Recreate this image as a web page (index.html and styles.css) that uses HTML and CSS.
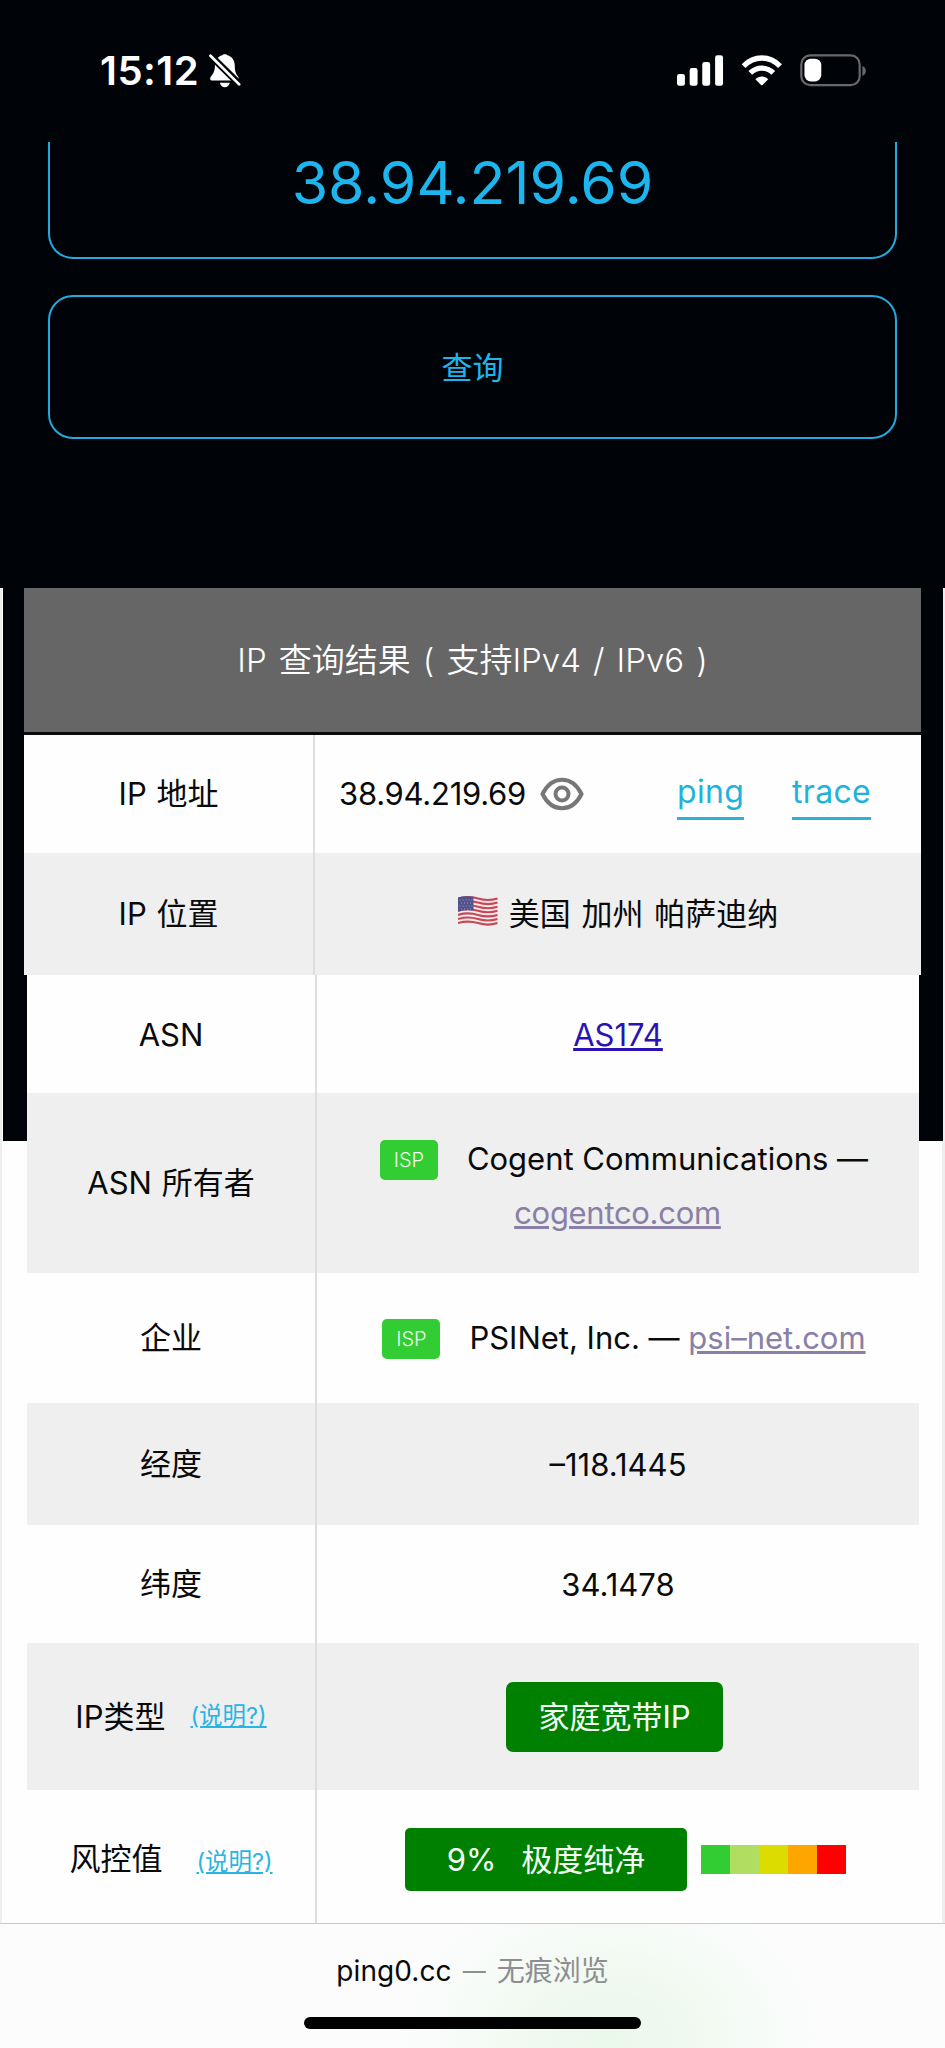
FILE: index.html
```html
<!DOCTYPE html>
<html lang="zh-CN">
<head>
<meta charset="utf-8">
<title>ping0.cc</title>
<link rel="stylesheet" href="styles.css">
</head>
<body>
<div class="phone">
  <header class="status">
    <span class="clock">15:12</span>
    <svg class="bell" width="32" height="36" viewBox="0 0 32 36">
      <path fill="#fff" d="M13.5 2.2C13.5.6 18.500.6 18.500 2.200C23.500 3.500 26 7.500 26 12.500C26 19 27.500 21.500 29.300 23.500C30.800 25.500 30 27.600 27.500 27.600H3.500C1 27.600.5 25.300 2 23.500C4 21 6 18.500 6 12.500C6 7.500 8.500 3.500 13.500 2.200ZM11 29.800H21C20.300 32.700 18.500 34.300 16 34.300S11.700 32.700 11 29.800Z"/>
      <path stroke="#000408" stroke-width="7" d="M0 1L32 32.500"/>
      <path stroke="#fff" stroke-width="2.800" stroke-linecap="round" d="M1.500 2.500L30.500 31.500"/>
    </svg>
    <svg class="signal" width="48" height="32" viewBox="0 0 48 32">
      <g fill="#fff"><rect x="0" y="19" width="8" height="12" rx="2.400"/><rect x="12.800" y="13" width="8" height="18" rx="2.400"/><rect x="25.500" y="7" width="8" height="24" rx="2.400"/><rect x="38.500" y="0" width="8" height="31" rx="2.400"/></g>
    </svg>
    <svg class="wifi" width="42" height="32" viewBox="0 0 42 32">
      <g fill="none" stroke="#fff" stroke-width="5.400"><path d="M2.600 11C13.200.2 28.800.2 39.400 11"/><path d="M9.400 18C16 11.400 26 11.400 32.600 18"/></g>
      <path fill="#fff" d="M14.500 24.300C18.200 20.800 23.800 20.800 27.500 24.300L21.700 30.200Q21 30.800 20.300 30.200Z"/>
    </svg>
    <svg class="battery" width="68" height="34" viewBox="0 0 68 34">
      <rect x="1.300" y="1.300" width="59" height="30" rx="9" fill="none" stroke="#69696b" stroke-width="2.200"/>
      <rect x="4.500" y="4.500" width="17" height="23" rx="6.500" fill="#fff"/>
      <path d="M63 12Q66.500 13.500 66.500 17T63 22Z" fill="#69696b"/>
    </svg>
  </header>

  <main>
    <div class="field">38.94.219.69</div>
    <div class="query">查询</div>

    <section class="result">
      <div class="caption"><span>IP 查询结果 ( 支持IPv4 / IPv6 )</span></div>
      <div class="wide">
        <div class="row r-ip">
          <div class="key han">IP 地址</div>
          <div class="val address">
            <span class="ip">38.94.219.69</span>
            <svg class="eye" width="44" height="34" viewBox="0 0 44 34"><g fill="none" stroke="#777" stroke-width="4"><path d="M2.500 17C12-2 32-2 41.500 17C32 36 12 36 2.500 17Z"/><circle cx="22" cy="17" r="6.500"/></g></svg>
            <a class="tool ping">ping</a><a class="tool trace">trace</a>
          </div>
        </div>
        <div class="row alt r-loc">
          <div class="key han">IP 位置</div>
          <div class="val place">
            <svg class="flag" width="40" height="30" viewBox="0 0 40 30">
              <path fill="#f6e9ea" d="M0 2Q10-1 20 2T39.500 2V27Q30 30 20 27T0 28Z"/>
              <g fill="none" stroke="#c44a58" stroke-width="2.100"><path d="M0 2.500Q10-.5 20 2.500T39.500 2.500"/><path d="M0 6.600Q10 3.600 20 6.600T39.500 6.600"/><path d="M0 10.700Q10 7.700 20 10.700T39.500 10.700"/><path d="M0 14.800Q10 11.800 20 14.800T39.500 14.800"/><path d="M0 18.900Q10 15.900 20 18.900T39.500 18.900"/><path d="M0 23Q10 20 20 23T39.500 23"/><path d="M0 27.100Q10 24.100 20 27.100T39.500 27.100"/></g>
              <path fill="#51528c" d="M0 1.500Q8-.8 15.500.8V14.800Q8 13.500 0 15.800Z"/>
              <g stroke="#9a9bc0" stroke-width="1" stroke-dasharray="1 2"><path d="M1.500 4H15M3 7H15M1.500 10H15M3 13H15"/></g>
            </svg>
            <span class="city">美国 加州 帕萨迪纳</span>
          </div>
        </div>
      </div>
      <div class="narrow">
        <div class="row r-asn"><div class="key">ASN</div><div class="val"><a class="asn">AS174</a></div></div>
        <div class="row alt r-owner"><div class="key han">ASN 所有者</div><div class="val"><p class="org two"><span class="isp">ISP</span><span class="orgname">Cogent Communications —</span><br><a class="site cogent">cogentco.com</a></p></div></div>
        <div class="row r-company"><div class="key han">企业</div><div class="val"><p class="org"><span class="isp">ISP</span><span class="orgname inc">PSINet, Inc. — </span><a class="site psi">psi–net.com</a></p></div></div>
        <div class="row alt r-lon"><div class="key han">经度</div><div class="val num">–118.1445</div></div>
        <div class="row r-lat"><div class="key han">纬度</div><div class="val num">34.1478</div></div>
        <div class="row alt r-type"><div class="key han">IP类型<a class="help">(说明?)</a></div><div class="val"><span class="tag type">家庭宽带IP</span></div></div>
        <div class="row r-risk"><div class="key">风控值<a class="help far">(说明?)</a></div><div class="val"><span class="tag risk"><span class="score">9%</span><span>极度纯净</span></span><span class="scale"><i class="s1"></i><i class="s2"></i><i class="s3"></i><i class="s4"></i><i class="s5"></i></span></div></div>
      </div>
    </section>
  </main>

  <footer class="bar">
    <div class="url"><span class="domain">ping0.cc</span><span class="dash">—</span><span>无痕浏览</span></div>
    <div class="home"></div>
  </footer>
</div>
</body>
</html>
```

FILE: styles.css
```css
* { box-sizing: border-box; }
body { margin: 0; background: #fefefe; font-family: Inter, "Noto Sans CJK SC", sans-serif; color: #0a0a0a; }
p { margin: 0; }
.phone { width: 945px; height: 2048px; overflow: hidden; display: flex; flex-direction: column;
  background: linear-gradient(#000408, #000408) 0 0 / 945px 588px no-repeat,
    linear-gradient(#000408, #000408) 2.5px 588px / 940px 553px no-repeat,
    linear-gradient(90deg, #eee 2.5px, #fefefe 2.5px, #fefefe 942.5px, #eee 942.5px); }

.status { height: 142px; display: flex; align-items: flex-start; padding: 54px 78px 0 100px; color: #fff; }
.clock { font-size: 40px; line-height: 34px; font-weight: 600; letter-spacing: 0.5px; width: 110px; white-space: nowrap; }
.bell { margin-top: -1px; }
.signal { margin-left: 436px; margin-top: 1px; }
.wifi { margin-left: 17px; margin-top: 1px; }
.battery { margin-left: 17px; }

.field { margin: 0 48px; height: 117px; border: 2px solid #24a9de; border-top: 0; border-radius: 0 0 25px 25px; text-align: center; font-size: 59px; line-height: 82px; color: #1cb5ee; }
.query { margin: 36px 48px 0; height: 144px; padding-bottom: 3px; border: 2px solid #24a9de; border-radius: 25px; font-size: 31px; color: #1cb5ee; display: flex; align-items: center; justify-content: center; }

.result { margin-top: 149px; font-size: 31px; }
.caption { margin: 0 24px; height: 147px; padding-bottom: 4px; background: #666; border-bottom: 3px solid #0b0b0d; color: #fff; font-size: 33px; font-weight: 350; word-spacing: 2.8px; display: flex; align-items: center; justify-content: center; white-space: nowrap; }
.wide { margin: 0 24px; }
.narrow { margin: 0 26px 0 27px; }
.row { display: flex; background: #fefefe; }
.alt { background: #efefef; }
.key { width: 290px; border-right: 2px solid #dedede; flex: none; display: flex; align-items: center; justify-content: center; white-space: nowrap; }
.wide .key { width: 291px; }
.key.han { padding-bottom: 5px; word-spacing: 1px; }
.val { flex: 1; display: flex; align-items: center; justify-content: center; white-space: nowrap; }
.r-ip { height: 118px; }
.r-loc { height: 122px; }
.r-asn { height: 118px; }
.r-owner { height: 180px; }
.r-company { height: 130px; }
.r-lon { height: 122px; }
.r-lat { height: 118px; }
.r-type { height: 147px; }
.r-risk { height: 133px; }

.address { justify-content: flex-start; padding-left: 24px; }
.ip { width: 201px; letter-spacing: -0.25px; margin-top: -2px; }
.tool { color: #1fb3dc; border-bottom: 3px solid #2cb2d6; line-height: 42px; padding-bottom: 4px; margin-top: 3px; letter-spacing: 0.3px; font-size: 32px; }
.ping { margin-left: 93px; }
.trace { margin-left: 48px; }
.place { gap: 11px; }
.city { word-spacing: 2px; margin-top: -5px; }
.flag { margin-top: -6px; }
.asn { color: #2b12b5; text-decoration: underline; }
.org { text-align: center; line-height: 54px; padding-right: 4px; }
.org.two { padding-top: 5px; }
.isp { display: inline-block; margin-left: 16px; margin-right: 29px; width: 58px; height: 40px; border-radius: 5px; background: #32cd32; color: #f0fff0; font-size: 20px; line-height: 40px; font-weight: 300; vertical-align: 3px; text-align: center; }
.site { color: #8a7fa6; text-decoration: underline; }
.cogent { letter-spacing: -0.3px; margin-left: 3px; }
.help { color: #27b5e6; font-size: 23.5px; text-decoration: underline; margin-left: 25px; }
.help.far { margin-left: 34px; margin-top: 6px; }
.tag { background: #008000; color: #f4fff4; display: flex; align-items: center; justify-content: center; padding-bottom: 4px; }
.type { width: 217px; height: 70px; border-radius: 7px; margin-right: 7px; }
.risk { width: 282px; height: 63px; border-radius: 5px; gap: 25px; }
.score { margin-top: 4px; }
.r-risk .val { padding: 6px 0 0 15px; }
.scale { display: flex; margin-left: 14px; }
.scale i { width: 29px; height: 29px; }
.s1 { background: #32cd32; }
.s2 { background: #b0de60; }
.s3 { background: #dcdc00; }
.s4 { background: #ffa500; }
.s5 { background: #ff0000; }

.bar { height: 125px; border-top: 1px solid #c8c8c8; display: flex; flex-direction: column; align-items: center;
  background: radial-gradient(ellipse 210px 150px at 610px 110px, #e9f8e9, rgba(233, 248, 233, 0)), #fcfcfd; }
.url { margin-top: 25px; height: 44px; line-height: 44px; font-size: 28px; color: #8e8e90; display: flex; gap: 11px; }
.domain { color: #0a0a0a; letter-spacing: 0.1px; }
.dash { font-size: 23px; }
.home { margin-top: 24px; width: 337px; height: 12px; border-radius: 6px; background: #000; }
```
